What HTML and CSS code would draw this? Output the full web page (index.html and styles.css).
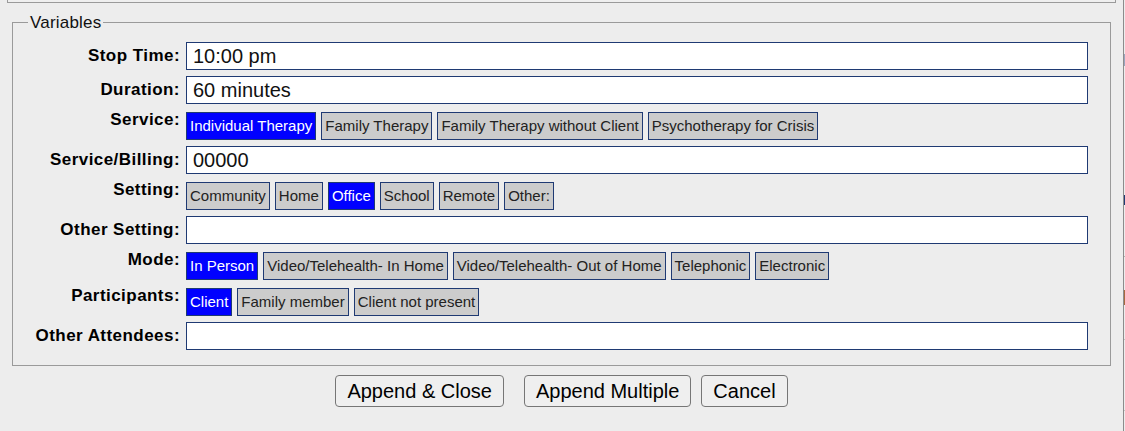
FILE: index.html
```html
<!DOCTYPE html>
<html lang="en">
<head>
    <meta charset="UTF-8">
    <meta name="viewport" content="width=device-width, initial-scale=1.0">
    <title>Variables</title>
    <link rel="stylesheet" href="styles.css">
</head>
<body>
    <div class="dialog">
        <div class="panel">
            <div class="topbox"></div>

            <fieldset class="variables">
                <legend>Variables</legend>
                <div class="form">
                    <label class="lbl">Stop Time:</label>
                    <input class="txt" type="text" value="10:00 pm">

                    <label class="lbl">Duration:</label>
                    <input class="txt" type="text" value="60 minutes">

                    <label class="lbl top">Service:</label>
                    <div class="choices">
                        <span class="opt on">Individual Therapy</span>
                        <span class="opt">Family Therapy</span>
                        <span class="opt">Family Therapy without Client</span>
                        <span class="opt">Psychotherapy for Crisis</span>
                    </div>

                    <label class="lbl">Service/Billing:</label>
                    <input class="txt" type="text" value="00000">

                    <label class="lbl top">Setting:</label>
                    <div class="choices">
                        <span class="opt">Community</span>
                        <span class="opt">Home</span>
                        <span class="opt on">Office</span>
                        <span class="opt">School</span>
                        <span class="opt">Remote</span>
                        <span class="opt">Other:</span>
                    </div>

                    <label class="lbl">Other Setting:</label>
                    <input class="txt" type="text" value="">

                    <label class="lbl top">Mode:</label>
                    <div class="choices">
                        <span class="opt on">In Person</span>
                        <span class="opt">Video/Telehealth- In Home</span>
                        <span class="opt">Video/Telehealth- Out of Home</span>
                        <span class="opt">Telephonic</span>
                        <span class="opt">Electronic</span>
                    </div>

                    <label class="lbl top">Participants:</label>
                    <div class="choices">
                        <span class="opt on">Client</span>
                        <span class="opt">Family member</span>
                        <span class="opt">Client not present</span>
                    </div>

                    <label class="lbl">Other Attendees:</label>
                    <input class="txt" type="text" value="">
                </div>
            </fieldset>

            <div class="actions">
                <button class="btn wide-gap">Append &amp; Close</button>
                <button class="btn">Append Multiple</button>
                <button class="btn">Cancel</button>
            </div>
        </div>
    </div>
    <div class="edge"></div>
</body>
</html>
```

FILE: styles.css
```css
body {
    margin: 0;
    padding: 0;
    display: flex;
    height: 431px;
    overflow: hidden;
    background-color: #ededed;
    font-family: "Liberation Sans", Arial, sans-serif;
    color: #000;
}
.dialog {
    width: 1123px;
    border-right: 1px solid #8c8c8c;
    background-color: #ededed;
}
.edge {
    flex: 1;
    background: linear-gradient(to bottom,
        #ededed 0, #ededed 54px, #9aa6c0 54px, #9aa6c0 66px, #ededed 66px,
        #ededed 195px, #1f3a73 195px, #1f3a73 205px, #ededed 205px,
        #ededed 256px, #b4b4b4 256px, #b4b4b4 257px, #ededed 257px,
        #ededed 290px, #a8693f 290px, #a8693f 305px, #ededed 305px,
        #ededed 339px, #c4c4c4 339px, #c4c4c4 340px, #ededed 340px,
        #ededed 410px, #c4c4c4 410px, #c4c4c4 411px, #ededed 411px);
}
.panel {
    margin-left: 7px;
    width: 1109px;
}
.topbox {
    height: 2px;
    border: 1px solid #9a9a9a;
    border-top: none;
    background-color: #efefef;
}
.variables {
    margin: 10px 5px 0;
    padding: 10px 22px 15px 15px;
    border: 1px solid #9a9a9a;
    min-width: 0;
}
.variables legend {
    padding: 0 2px;
    font-size: 17px;
    line-height: 19px;
    letter-spacing: 0.2px;
    color: #111;
}
.form {
    display: grid;
    grid-template-columns: 152px 1fr;
    column-gap: 6px;
    row-gap: 6px;
}
.lbl {
    align-self: center;
    text-align: right;
    font-weight: bold;
    font-size: 17px;
    line-height: 18px;
    letter-spacing: 0.45px;
    white-space: nowrap;
}
.lbl.top {
    align-self: start;
    margin-top: 1px;
}
.txt {
    box-sizing: border-box;
    width: 100%;
    height: 28px;
    margin: 0;
    padding: 0 6px;
    border: 1px solid #1f3a73;
    border-radius: 0;
    background-color: #fff;
    font-family: inherit;
    font-size: 20px;
    color: #111;
    outline: none;
}
.choices {
    display: flex;
    gap: 5px;
    padding-top: 2px;
}
.opt {
    box-sizing: border-box;
    height: 28px;
    padding: 0 3px;
    border: 1px solid #1f3a73;
    background-color: #cccccc;
    color: #222;
    font-size: 15px;
    line-height: 26px;
    white-space: nowrap;
}
.opt.on {
    background-color: #0000ff;
    color: #fff;
}
.actions {
    display: flex;
    justify-content: center;
    margin: 9px 5px 0;
}
.btn {
    box-sizing: border-box;
    height: 32px;
    margin: 0 10px 0 0;
    padding: 0 11px;
    border: 1px solid #767676;
    border-radius: 4px;
    background-color: #efefef;
    font-family: inherit;
    font-size: 20px;
    color: #000;
}
.btn.wide-gap {
    margin-right: 20px;
}
.btn:last-child {
    margin-right: 0;
}
```
